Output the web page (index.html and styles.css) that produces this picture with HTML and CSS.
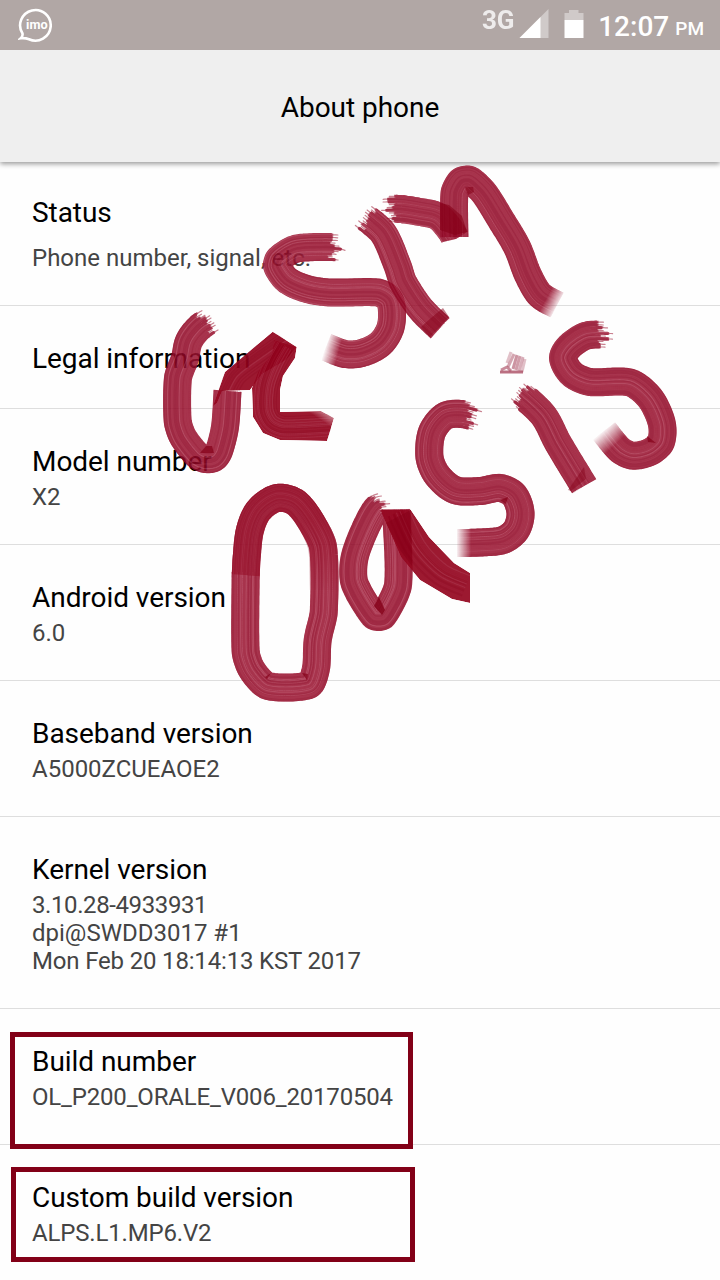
FILE: index.html
```html
<!DOCTYPE html>
<html lang="en">
<head>
<meta charset="utf-8">
<title>About phone</title>
<link rel="stylesheet" href="styles.css">
</head>
<body>
<div class="phone">
  <div class="statusbar">
    <svg class="imo" width="36" height="36" viewBox="0 0 36 36">
      <path d="M4.500 26.500A15.300 15.300 0 1 1 11 32.200Q7 30.800 2.800 31.300Q5 29.500 4.500 26.500Z"/>
      <text x="18.800" y="22" textLength="21.500" lengthAdjust="spacingAndGlyphs">imo</text>
    </svg>
    <div class="indicators">
      <span class="network">3G</span>
      <svg class="signal" width="30" height="30" viewBox="0 0 30 30"><path d="M0.500 29L29.500 0V29Z" fill="#fff" opacity=".4"/><path d="M0.500 29L21.500 8V29Z" fill="#fff"/></svg>
      <svg class="battery" width="20" height="30" viewBox="0 0 20 30"><path d="M0.500 4H5V1H14.500V4H19.500V11H0.500Z" fill="#fff" opacity=".4"/><path d="M0.500 11H19.500V29H0.500Z" fill="#fff"/></svg>
      <span class="time">12:07</span><span class="pm">PM</span>
    </div>
  </div>
  <header class="header"><h1>About phone</h1></header>
  <main class="list">
    <section class="row status"><h2>Status</h2><p>Phone number, signal, etc.</p></section>
    <section class="row legal"><h2>Legal information</h2></section>
    <section class="row"><h2>Model number</h2><p>X2</p></section>
    <section class="row"><h2>Android version</h2><p>6.0</p></section>
    <section class="row"><h2>Baseband version</h2><p>A5000ZCUEAOE2</p></section>
    <section class="row kernel"><h2>Kernel version</h2><p><span class="tighter">3.10.28-4933931</span><br>dpi@SWDD3017 #1<br><span class="tight">Mon Feb 20 18:14:13 KST 2017</span></p></section>
    <section class="row"><h2>Build number</h2><p class="tight">OL_P200_ORALE_V006_20170504</p><div class="mark build"></div></section>
    <section class="row"><h2>Custom build version</h2><p class="tight">ALPS.L1.MP6.V2</p><div class="mark custom"></div></section>
  </main>
  <svg class="paint" width="720" height="1280" viewBox="0 0 720 1280" aria-label="GSM Oasis"></svg>
</div>
<script src="paint.js"></script>
</body>
</html>
```
FILE: styles.css
```css
* { box-sizing: border-box; }
body { margin: 0; background: #fefefe; font-family: Roboto, "Liberation Sans", sans-serif; }
.phone { position: relative; width: 720px; height: 1280px; overflow: hidden; }
.statusbar { height: 50px; background: #b1a7a5; color: #fff; display: flex; justify-content: space-between; padding: 0 16px 0 18px; }
.imo { margin-top: 7px; fill: none; stroke: #fff; stroke-width: 2.600; }
.imo text { fill: #fff; stroke: none; font-size: 13px; font-weight: 700; text-anchor: middle; }
.indicators { display: flex; align-items: flex-start; }
.network { font-size: 26px; font-weight: 700; line-height: 30px; margin-top: 5px; margin-right: 5px; color: #eeecec; letter-spacing: -.2px; filter: blur(.5px); }
.signal { margin-top: 9px; }
.battery { margin-top: 9px; margin-left: 15px; }
.time { font-size: 28px; font-weight: 500; line-height: 34px; margin-left: 14px; margin-top: 10px; }
.pm { font-size: 19px; font-weight: 500; line-height: 26px; margin-left: 6px; margin-top: 16px; }
.header { position: relative; height: 112px; background: #efefef; display: flex; align-items: center; justify-content: center; box-shadow: 0 2px 5px rgba(0,0,0,.4); }
.statusbar { position: relative; z-index: 1; }
h1, h2 { margin: 0; color: #000; font-size: 28px; font-weight: 400; line-height: 36px; letter-spacing: -.05px; }
h1 { padding-top: 3px; }
.row { position: relative; height: 136px; padding: 35px 32px 0; border-bottom: 1px solid #dedede; }
.row p { margin: 3px 0 0; font-size: 24px; line-height: 28px; color: #444; white-space: nowrap; }
.tight { letter-spacing: -.17px; }
.tighter { letter-spacing: -.4px; }
.status { height: 144px; padding-top: 33px; }
.row.status p { margin-top: 13px; }
.legal { height: 103px; }
.kernel { height: 192px; }
.mark { position: absolute; border: 5px solid #820017; }
.build { left: 10px; top: 23px; width: 403px; height: 117px; }
.custom { left: 11px; top: 22px; width: 404px; height: 95px; }
.paint { position: absolute; left: 0; top: 0; }
.paint path { fill: none; stroke-linejoin: round; }
```
FILE: paint.js
```js
const NS = 'http://www.w3.org/2000/svg';
const svg = document.querySelector('.paint');
let seed = 7;
const rnd = () => (seed = (seed * 16807) % 2147483647) / 2147483647;

// p: centre line, start: length of dry bristles, fade: [x1,y1,x2,y2] from solid to clear
const strokes = [
  { p: [[214,318],[200,327],[189,341],[185,358],[178,378],[177.700,421],[183,437],[197,455],[205,459],[214,458],[219,451],[225,427],[227.500,391]], start: 15 },
  { p: [[226,393],[235,376],[248,365],[285,339]], shape: '213,406 225,372 272.700,331.700 296.700,347 286,360 262,374 250,390 222,391 217,403', dark: 1 },
  { p: [[285,346],[275,364],[267,386],[266,410],[272,422],[284,427],[331,425]], shape: '274,340 296.700,347 295,358 283,376 280,390 280,412 321,411 334,418 327,441 280,440 263,433 253,417 252,388 258,372 272,354', dark: 1, fade: [324,422,335,405] },
  { p: [[352,252],[342,248],[323,247],[295,249],[279,259],[277,266],[287,280],[307,289],[330,292.500],[378,292.500],[389,299],[392,312],[390,329],[380,344],[362,353],[345,354],[326,347]], start: 32 },
  { p: [[361,214],[383,233],[398,267],[403,282],[420,308],[440,328]], start: 16 },
  { p: [[379,209],[400,209],[420,212],[437,216],[448,227],[456,239]], start: 24, crop: '370,190 440,190 470,215 469,236 443,242 420,260 370,240' },
  { p: [[454.500,237],[454.500,193],[461,181],[470,180],[484,193],[501,220],[517,247],[528,275],[540,295],[557,305]], fade: [546,299,559,306] },
  { p: [[245.700,578],[246.700,557],[250,530],[259,510],[277,498],[295,502],[310,520],[323,547],[323.700,612],[317.700,640],[316,668],[309,685],[268,686],[252,670],[245.700,652],[245.700,572]] },
  { p: [[245.700,575],[246.700,557],[250,530],[259,510],[277,498],[295,502],[310,520],[322,547],[323,590]], dark: 1, fade: [323,520,323,595], thin: 1 },
  { p: [[391,505],[378,507],[366,527],[354.500,558],[354.500,583],[374,616],[383,616],[398,585],[396,509.500]], start: 20 },
  { p: [[398,512],[416,549],[440,574],[466,586]], shape: '380,509.500 410.500,509.500 429,537 454,563 470,573 470,603 452,599 420,580 401,557 386,523', dark: 1 },
  { p: [[482,419],[462,414],[445,416],[432,432],[429.500,457],[437,475],[455,490],[480,491],[500,488],[514,495],[520.500,513],[516,530],[503,540],[480,542.500],[457,543]], start: 22, fade: [471,543,456,543] },
  { p: [[516,390],[543,415],[558,443],[584,486]], start: 18 },
  { p: [[615,335],[587,335.500],[570,346],[563,358],[572,374],[590,382],[630,382.500],[650,398],[661.700,423],[661,442],[650,452],[633,455.700],[620,450],[604,431]], start: 26, fade: [616,444,603,430] }
];
strokes[3].fade = [339, 351, 325, 347];

function add(parent, tag, attrs) {
  const e = document.createElementNS(NS, tag);
  for (const k in attrs) e.setAttribute(k, attrs[k]);
  parent.appendChild(e);
  return e;
}

function curve(p) {
  const out = [];
  for (let i = 0; i < p.length - 1; i++) {
    const a = p[Math.max(0, i - 1)], b = p[i], c = p[i + 1], d = p[Math.min(p.length - 1, i + 2)];
    const n = Math.max(2, Math.ceil(Math.hypot(c[0] - b[0], c[1] - b[1]) / 2));
    // shorter tangents at uneven joints keep the curve from looping
    const k1 = Math.min(1, Math.hypot(c[0] - b[0], c[1] - b[1]) / (Math.hypot(b[0] - a[0], b[1] - a[1]) || 1));
    const k2 = Math.min(1, Math.hypot(c[0] - b[0], c[1] - b[1]) / (Math.hypot(d[0] - c[0], d[1] - c[1]) || 1));
    for (let j = 0; j < n; j++) {
      const t = j / n, t2 = t * t, t3 = t2 * t;
      out.push([0, 1].map(q => (2*t3 - 3*t2 + 1) * b[q] + (t3 - 2*t2 + t) * (c[q] - a[q]) / 2 * k1 + (3*t2 - 2*t3) * c[q] + (t3 - t2) * (d[q] - b[q]) / 2 * k2));
    }
  }
  out.push(p[p.length - 1]);
  return out;
}

const toPath = pts => 'M' + pts.map(q => q[0].toFixed(1) + ' ' + q[1].toFixed(1)).join('L');

strokes.forEach((s, i) => {
  const g = add(svg, 'g', { opacity: s.thin ? 0.5 : s.dark ? 0.93 : 0.86 });
  const region = s.crop || s.shape;
  if (region) {
    add(add(svg, 'clipPath', { id: 'c' + i }), 'polygon', { points: region });
    g.setAttribute('clip-path', `url(#c${i})`);
  }
  if (s.fade) {
    const [x1, y1, x2, y2] = s.fade;
    const lg = add(svg, 'linearGradient', { id: 'f' + i, gradientUnits: 'userSpaceOnUse', x1, y1, x2, y2 });
    add(lg, 'stop', { offset: 0, 'stop-color': '#fff' });
    add(lg, 'stop', { offset: 1, 'stop-color': '#000' });
    const m = add(svg, 'mask', { id: 'm' + i, maskUnits: 'userSpaceOnUse', x: 0, y: 0, width: 720, height: 1280 });
    if (s.thin) {
      add(m, 'rect', { width: 720, height: 1280, fill: '#fff' });
      add(m, 'rect', { x: 296, width: 424, height: 1280, fill: `url(#f${i})` });
    } else {
      // the gradient applies only around the stroke end; the rest stays solid
      add(m, 'rect', { width: 720, height: 1280, fill: '#fff' });
      const dx = x2 - x1, dy = y2 - y1, L = Math.hypot(dx, dy), a = [dx / L, dy / L], n = [-a[1] * 22, a[0] * 22];
      const e = [x1 + a[0] * 24, y1 + a[1] * 24];
      add(m, 'polygon', { fill: `url(#f${i})`, points: `${x1+n[0]},${y1+n[1]} ${e[0]+n[0]},${e[1]+n[1]} ${e[0]-n[0]},${e[1]-n[1]} ${x1-n[0]},${y1-n[1]}` });
    }
    g.setAttribute('mask', `url(#m${i})`);
  }
  const base = s.dark ? '#950821' : '#970d2a';
  const pts = curve(s.p);
  if (s.shape) add(g, 'polygon', { points: s.shape, fill: base });
  const skip = Math.round((s.start || 0) / 2);
  if (!s.shape) add(g, 'path', { d: toPath(pts.slice(skip)), stroke: base, style: 'stroke-width:28px' });
  const normals = pts.map((q, j) => {
    const a = pts[Math.max(0, j - 4)], b = pts[Math.min(pts.length - 1, j + 4)];
    const l = Math.hypot(b[0] - a[0], b[1] - a[1]) || 1;
    return [-(b[1] - a[1]) / l, (b[0] - a[0]) / l];
  });
  const offsetLine = (off, from, to) => pts.slice(from, to).map((q, j) => [q[0] + normals[j + from][0] * off, q[1] + normals[j + from][1] * off]);
  const tips = [];
  // clumps of paint that thin out towards the dry end
  if (skip) {
    for (let k = 0; k < 10; k++) {
      const off = -12.400 + k * 24.800 / 9;
      const tip = Math.floor(skip * (0.05 + rnd() * .5 + Math.abs(off) / 13 * .3));
      tips.push(tip);
      const mid = Math.min(skip, tip + 3);
      add(g, 'path', { d: toPath(offsetLine(off, tip, skip + 2)), stroke: base, 'stroke-width': 1.2, 'stroke-opacity': .6, 'stroke-linecap': 'round' });
      if (mid < skip + 1) add(g, 'path', { d: toPath(offsetLine(off, mid, skip + 2)), stroke: base, 'stroke-width': 3.2, 'stroke-linecap': 'round' });
    }
  }
  for (let k = 0; k < 22; k++) {
    const off = -13.200 + k * 26.400 / 21 + (rnd() - .5) * .5;
    const from = skip ? tips[Math.min(9, Math.round(k * 9 / 21))] + 2 : 0;
    const tone = s.dark ? ['#8d0019', '#960a24', '#a0203a'] : ['#8d0624', '#9b1734', '#ad3853'];
    const color = rnd() < .22 ? tone[2] : rnd() < .5 ? tone[0] : tone[1];
    if (s.shape && Math.abs(off) > 11) continue;
    add(g, 'path', { d: toPath(offsetLine(off, from)), stroke: color, 'stroke-width': (0.7 + rnd() * .8).toFixed(1), 'stroke-opacity': .75 });
  }
});

// dark overlaps where the brush crosses itself
[['440,203 449,205 462,216 467,232 455,235 440,230', .6],
 ['465,187 473,187 474,192 468,195', .55],
 ['431,318 443,308 449,317 430,337 421,327', .5],
 ['374,606 379,597 385,610 382,615', .8],
 ['386,523 411,510 412,566 400,550', .5],
 ['200,453 206,446 212,446 214,453', .7],
 ['568,490 584,467 586,479 571,491', .45],
 ['500,500 508,497 506,504', .7],
 ['265,677 271,673 267,679', .7], ['302,673 308,674 307,680', .7],
 ['647,436 656,443 648,442', .7]].forEach(([points, opacity]) => add(svg, 'polygon', { points, opacity, fill: '#850018' }));

// dot of the i
const dot = add(svg, 'g', { opacity: .75 });
[['M511 352L507 363', .35], ['M514 354L508 367', .5], ['M517 355L513 369', .6], ['M520 356L516 370', .55], ['M523 357L519 371', .45], ['M525 359L522 372', .35], ['M500 372L523 372', .8], ['M501 370L507 367L511 371', .65]].forEach(([d, o]) => add(dot, 'path', { d, stroke: '#8f1230', 'stroke-width': 3, opacity: o }));
```
